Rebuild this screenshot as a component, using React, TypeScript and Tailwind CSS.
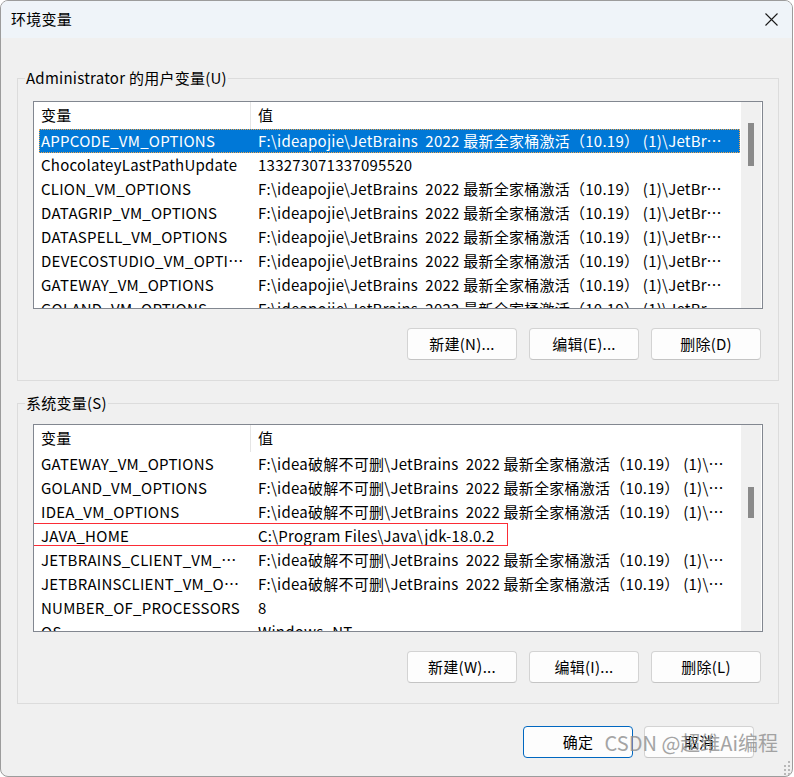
import React from 'react';

const JB1 = 'F:\\ideapojie\\JetBrains\u00a0 2022 最新全家桶激活（10.19）\u00a0(1)\\JetBrains\u00a0 2022 最新全家桶激活\\vmoptions';
const JB2 = 'F:\\idea破解不可删\\JetBrains\u00a0 2022 最新全家桶激活（10.19）\u00a0(1)\\JetBrains\u00a0 2022 最新全家桶激活\\vmoptions';

type Row = { name: string; value: string; selected?: boolean; marked?: boolean };

const userVars: Row[] = [
  { name: 'APPCODE_VM_OPTIONS', value: JB1, selected: true },
  { name: 'ChocolateyLastPathUpdate', value: '133273071337095520' },
  { name: 'CLION_VM_OPTIONS', value: JB1 },
  { name: 'DATAGRIP_VM_OPTIONS', value: JB1 },
  { name: 'DATASPELL_VM_OPTIONS', value: JB1 },
  { name: 'DEVECOSTUDIO_VM_OPTIONS', value: JB1 },
  { name: 'GATEWAY_VM_OPTIONS', value: JB1 },
  { name: 'GOLAND_VM_OPTIONS', value: JB1 },
];

const systemVars: Row[] = [
  { name: 'GATEWAY_VM_OPTIONS', value: JB2 },
  { name: 'GOLAND_VM_OPTIONS', value: JB2 },
  { name: 'IDEA_VM_OPTIONS', value: JB2 },
  { name: 'JAVA_HOME', value: 'C:\\Program Files\\Java\\jdk-18.0.2', marked: true },
  { name: 'JETBRAINS_CLIENT_VM_OPTIONS', value: JB2 },
  { name: 'JETBRAINSCLIENT_VM_OPTIONS', value: JB2 },
  { name: 'NUMBER_OF_PROCESSORS', value: '8' },
  { name: 'OS', value: 'Windows_NT' },
];

const WinButton = ({ label, primary }: { label: string; primary?: boolean }) => (
  <button
    className={
      'w-[110px] h-[32px] rounded-[4px] bg-[#fdfdfd] text-[15px] text-black ' +
      (primary ? 'border border-[#0067c0]' : 'border border-[#d3d3d3] border-b-[#c4c4c4]')
    }
  >
    {label}
  </button>
);

const VarList = ({ rows, thumbTop, thumbHeight }: { rows: Row[]; thumbTop: string; thumbHeight: string }) => (
  <div className="flex w-[730px] h-[208px] border border-[#828790] bg-white overflow-hidden">
    <div className="flex-1 flex flex-col min-w-0">
      {/* header */}
      <div className="flex h-[27px] shrink-0 items-center">
        <div className="w-[217px] h-full flex items-center pl-[7px] border-r border-[#e5e5e5]">变量</div>
        <div className="flex-1 pl-[7px]">值</div>
      </div>
      {rows.map((r) => (
        <div
          key={r.name}
          className={
            'relative flex h-[24px] shrink-0 items-center ml-[5px] ' +
            (r.selected ? 'bg-[#0078d7] text-white outline outline-1 outline-dotted outline-[#f2a54a] -outline-offset-1' : '')
          }
        >
          <div className="w-[212px] shrink-0 pl-[2px] pr-[5px] truncate">{r.name}</div>
          <div className="flex-1 min-w-0 pl-[7px] pr-[12px] truncate">{r.value}</div>
          {r.marked && (
            <div className="absolute left-[-7px] top-[-1px] w-[476px] h-[23px] border border-solid border-red-500 pointer-events-none" />
          )}
        </div>
      ))}
    </div>
    {/* scrollbar */}
    <div className="w-[22px] shrink-0 bg-[#f0f0f0] border-l border-r border-white flex justify-center">
      <div className={`w-[6px] bg-[#8a8a8a] ${thumbTop} ${thumbHeight}`} />
    </div>
  </div>
);

export default function App() {
  return (
    <div
      className="w-[794px] h-[777px] bg-white text-black text-[15px] tracking-[0.25px] [text-spacing-trim:space-all]"
      style={{ fontFamily: '"Noto Sans CJK SC", "Noto Sans", sans-serif' }}
    >
      <div className="relative w-[793px] h-[777px] rounded-[8px] border border-[#9c9c9c] bg-[#f0f0f0] overflow-hidden flex flex-col">
        {/* title bar */}
        <div className="h-[37px] shrink-0 bg-[#eff4f9] flex items-center justify-between pl-[10px] pr-[14px]">
          <span className="text-[15px]">环境变量</span>
          <svg width="13" height="13" viewBox="0 0 13 13">
            <path d="M0.5 0.5 L12.5 12.5 M12.5 0.5 L0.5 12.5" stroke="#1a1a1a" strokeWidth="1.1" />
          </svg>
        </div>

        {/* body */}
        <div className="flex-1 flex flex-col pt-[30px] pl-[16px]">
          <fieldset className="w-[762px] border border-[#dcdcdc] px-[15px] pb-[20px]">
            <legend className="ml-[-8px] px-[1px] h-[20px] leading-[20px]">Administrator 的用户变量(U)</legend>
            <div className="pt-[13px]">
              <VarList rows={userVars} thumbTop="mt-[21px]" thumbHeight="h-[43px]" />
            </div>
            <div className="flex justify-end gap-[12px] mt-[19px] pr-[2px]">
              <WinButton label="新建(N)..." />
              <WinButton label="编辑(E)..." />
              <WinButton label="删除(D)" />
            </div>
          </fieldset>

          <fieldset className="w-[762px] border border-[#dcdcdc] px-[15px] pb-[20px] mt-[12px]">
            <legend className="ml-[-8px] px-[1px] h-[20px] leading-[20px]">系统变量(S)</legend>
            <div className="pt-[11px]">
              <VarList rows={systemVars} thumbTop="mt-[62px]" thumbHeight="h-[31px]" />
            </div>
            <div className="flex justify-end gap-[12px] mt-[19px] pr-[2px]">
              <WinButton label="新建(W)..." />
              <WinButton label="编辑(I)..." />
              <WinButton label="删除(L)" />
            </div>
          </fieldset>

          <div className="flex justify-end gap-[11px] mt-[22px] pr-[38px]">
            <WinButton label="确定" primary />
            <WinButton label="取消" />
          </div>
        </div>

        {/* watermark */}
        <div className="absolute right-[14px] bottom-[21px] text-[20px] leading-[24px] tracking-normal text-[#8f8f8f] opacity-80 pointer-events-none">
          CSDN @超维Ai编程
        </div>
        {/* resize grip */}
        <svg width="10" height="14" viewBox="0 0 10 14" className="absolute right-[1px] bottom-[1px]">
          <rect x="7" y="0" width="2" height="2" fill="#b8b8b8" />
          <rect x="7" y="4" width="2" height="2" fill="#b8b8b8" />
          <rect x="3" y="4" width="2" height="2" fill="#b8b8b8" />
          <rect x="7" y="8" width="2" height="2" fill="#b8b8b8" />
          <rect x="3" y="8" width="2" height="2" fill="#b8b8b8" />
          <rect x="7" y="12" width="2" height="2" fill="#b8b8b8" />
          <rect x="3" y="12" width="2" height="2" fill="#b8b8b8" />
        </svg>
      </div>
    </div>
  );
}
